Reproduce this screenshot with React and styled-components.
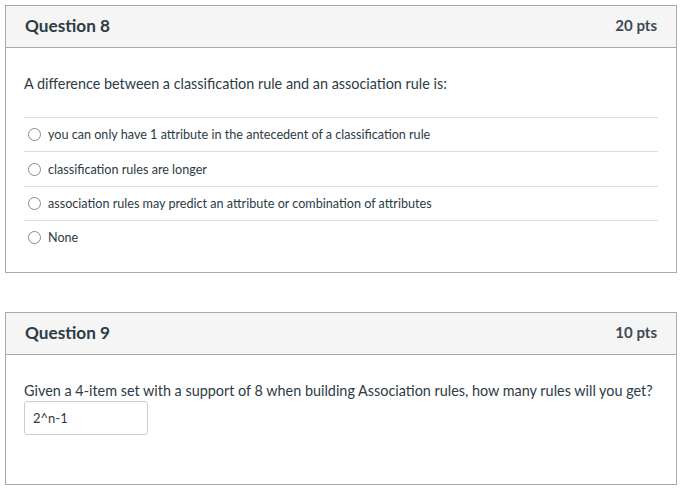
import React from "react";
import styled, { createGlobalStyle } from "styled-components";

const GlobalStyle = createGlobalStyle`
  body {
    margin: 0;
    background: #fff;
    font-family: Lato, "Noto Sans", sans-serif;
    color: #2d3b45;
  }
`;

const Page = styled.div`
  padding: 5px 3px 5px 5px;
  display: flex;
  flex-direction: column;
  gap: 39px;
`;

const Card = styled.div`
  border: 1px solid #a9a9a9;
  background: #fff;
  height: ${({ $h }) => $h}px;
  box-sizing: border-box;
`;

const Header = styled.div`
  display: flex;
  justify-content: space-between;
  align-items: center;
  height: 42px;
  padding: 0 19px 3px 19px;
  box-sizing: border-box;
  background: #f5f5f5;
  border-bottom: 1px solid #a9a9a9;
`;

const Title = styled.span`
  font-size: 17.2px;
  font-weight: 700;
  color: #2d3b45;
`;

const Points = styled.span`
  font-size: 15px;
  font-weight: 700;
  color: #3d4a53;
`;

const Body = styled.div`
  padding: 25px 18px 0 18px;
`;

const Prompt = styled.p`
  margin: 0;
  font-size: 14.4px;
  line-height: 21px;
  color: #2d3b45;
`;

const Answers = styled.div`
  margin-top: 23px;
  display: flex;
  flex-direction: column;
`;

const Answer = styled.label`
  display: flex;
  align-items: center;
  gap: 7px;
  height: 34.4px;
  box-sizing: border-box;
  padding-left: 4px;
  border-top: 1px solid #dcdfe1;
  font-size: 12.6px;
  color: #2d3b45;
`;

const Radio = styled.span`
  width: 11px;
  height: 11px;
  border: 1px solid #8a8a8a;
  border-radius: 50%;
  background: #fff;
  flex-shrink: 0;
`;

const Input = styled.div`
  margin-top: 0;
  width: 124px;
  height: 34px;
  box-sizing: border-box;
  border: 1px solid #c7cdd1;
  border-radius: 3px;
  display: flex;
  align-items: center;
  padding-left: 8px;
  font-size: 13px;
  color: #2d3b45;
`;

const options = [
  "you can only have 1 attribute in the antecedent of a classification rule",
  "classification rules are longer",
  "association rules may predict an attribute or combination of attributes",
  "None",
];

export default function App() {
  return (
    <>
      <GlobalStyle />
      <Page>
        <Card $h={268}>
          <Header>
            <Title>Question 8</Title>
            <Points>20 pts</Points>
          </Header>
          <Body>
            <Prompt>
              A difference between a classification rule and an association rule is:
            </Prompt>
            <Answers>
              {options.map((o) => (
                <Answer key={o}>
                  <Radio />
                  {o}
                </Answer>
              ))}
            </Answers>
          </Body>
        </Card>
        <Card $h={173}>
          <Header>
            <Title>Question 9</Title>
            <Points>10 pts</Points>
          </Header>
          <Body>
            <Prompt>
              Given a 4-item set with a support of 8 when building Association rules, how many rules will you get?
            </Prompt>
            <Input>2^n-1</Input>
          </Body>
        </Card>
      </Page>
    </>
  );
}
